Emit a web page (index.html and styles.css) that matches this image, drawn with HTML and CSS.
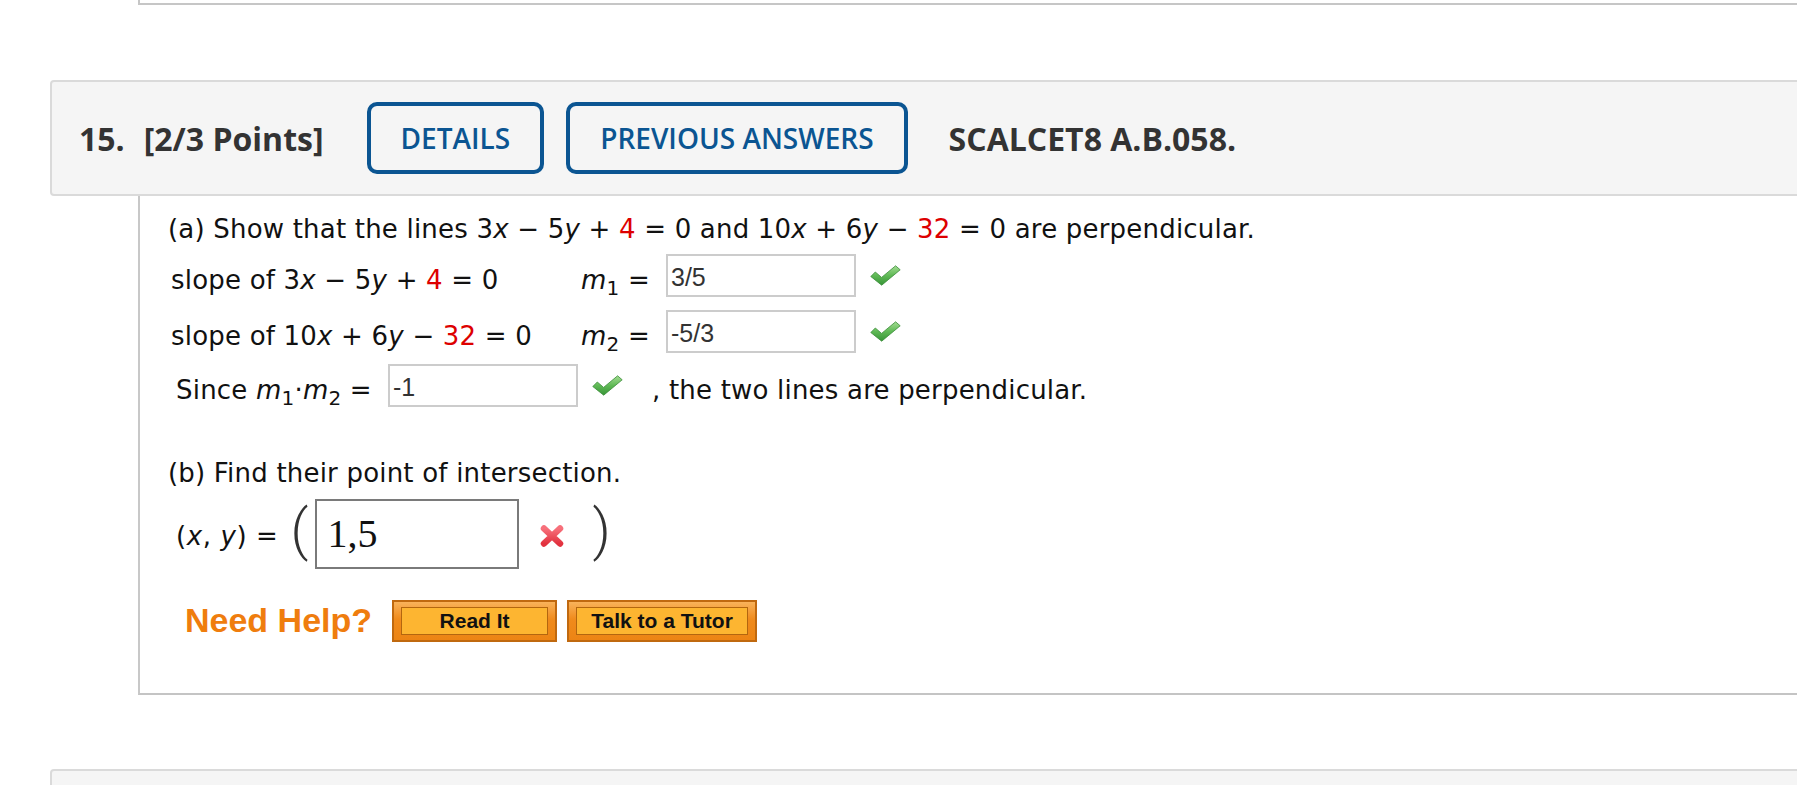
FILE: index.html
```html
<!DOCTYPE html>
<html lang="en">
<head>
<meta charset="utf-8">
<title>SCALCET8 A.B.058.</title>
<link rel="stylesheet" href="styles.css">
</head>
<body>
<svg class="sprite" aria-hidden="true">
  <defs>
    <linearGradient id="grad-check" x1="0" y1="0" x2="0" y2="1">
      <stop offset="0" stop-color="#a3dc92"/>
      <stop offset="0.5" stop-color="#5fb955"/>
      <stop offset="1" stop-color="#379437"/>
    </linearGradient>
    <linearGradient id="grad-cross" x1="0" y1="0" x2="0" y2="1">
      <stop offset="0" stop-color="#f7707b"/>
      <stop offset="1" stop-color="#e2323f"/>
    </linearGradient>
    <symbol id="i-check" viewBox="0 0 31 21">
      <path d="M0.8 11.5 L5.3 7 L11.6 12.4 L25.6 0.8 L30.2 4.8 L11.7 20.2 Z" fill="url(#grad-check)" stroke="#3a8d39" stroke-width="0.8" stroke-linejoin="round"/>
    </symbol>
    <symbol id="i-cross" viewBox="0 0 26 24">
      <path d="M5 4.5 L21 19.5 M21 4.5 L5 19.5" fill="none" stroke="url(#grad-cross)" stroke-width="6.5" stroke-linecap="round"/>
    </symbol>
  </defs>
</svg>

<div class="page">
  <div class="prev-question"></div>

  <section class="question">
    <header class="q-header">
      <span class="q-num">15.</span>
      <span class="q-points">[2/3 Points]</span>
      <button class="q-btn q-btn-details" type="button">DETAILS</button>
      <button class="q-btn q-btn-prev" type="button">PREVIOUS ANSWERS</button>
      <span class="q-code">SCALCET8 A.B.058.</span>
    </header>

    <div class="q-body">
      <p class="q-line">(a) Show that the lines 3<i>x</i> − 5<i>y</i> + <span class="red">4</span> = 0 and 10<i>x</i> + 6<i>y</i> − <span class="red">32</span> = 0 are perpendicular.</p>

      <div class="ans-row">
        <span class="ans-label">slope of 3<i>x</i> − 5<i>y</i> + <span class="red">4</span> = 0</span>
        <span class="ans-var"><i>m</i><sub>1</sub> =</span>
        <input class="ans-input" type="text" value="3/5">
        <svg class="check" width="31" height="21"><use href="#i-check"/></svg>
      </div>

      <div class="ans-row">
        <span class="ans-label">slope of 10<i>x</i> + 6<i>y</i> − <span class="red">32</span> = 0</span>
        <span class="ans-var"><i>m</i><sub>2</sub> =</span>
        <input class="ans-input" type="text" value="-5/3">
        <svg class="check" width="31" height="21"><use href="#i-check"/></svg>
      </div>

      <div class="ans-row since">
        <span class="since-label">Since <i>m</i><sub>1</sub>·<i>m</i><sub>2</sub> =</span>
        <input class="ans-input" type="text" value="-1">
        <svg class="check" width="31" height="21"><use href="#i-check"/></svg>
        <span class="since-tail">, the two lines are perpendicular.</span>
      </div>

      <p class="q-line part-b">(b) Find their point of intersection.</p>

      <div class="xy-row">
        <span class="xy-label">(<i>x</i>, <i>y</i>) =</span>
        <span class="paren">(</span>
        <div class="xy-box">1,5</div>
        <svg class="cross" width="26" height="24"><use href="#i-cross"/></svg>
        <span class="paren paren-close">)</span>
      </div>

      <div class="help-row">
        <span class="need-help">Need Help?</span>
        <button class="help-btn help-read" type="button"><span>Read It</span></button>
        <button class="help-btn help-tutor" type="button"><span>Talk to a Tutor</span></button>
      </div>
    </div>
  </section>

  <section class="question next">
    <header class="q-header q-header-next"></header>
  </section>
</div>
</body>
</html>
```

FILE: styles.css
```css
html, body {
  margin: 0;
  padding: 0;
  background: #ffffff;
  overflow: hidden;
}

body {
  font-family: "DejaVu Sans", Verdana, sans-serif;
  color: #111111;
}

.sprite {
  position: absolute;
  width: 0;
  height: 0;
  overflow: hidden;
}

.page {
  width: 100%;
  overflow: hidden;
}

.prev-question {
  margin-left: 138px;
  height: 3px;
  border-left: 2px solid #c6c6c6;
  border-bottom: 2px solid #c6c6c6;
}

/* ---------- header ---------- */
.q-header {
  margin-top: 75px;
  margin-left: 50px;
  margin-right: -20px;
  height: 116px;
  box-sizing: border-box;
  background: #f5f5f5;
  border: 2px solid #dadada;
  border-radius: 4px;
  display: flex;
  align-items: center;
  padding-left: 27px;
  font-family: "Open Sans", sans-serif;
  color: #333333;
}

.q-num,
.q-points,
.q-code {
  font-weight: 700;
  font-size: 32px;
  line-height: 40px;
  margin-top: 1px;
}

.q-num {
  margin-right: 19px;
}

.q-points {
  margin-right: 43px;
}

.q-btn {
  height: 72px;
  box-sizing: border-box;
  padding: 0 30px;
  border: 4px solid #0b5592;
  border-radius: 10px;
  background: transparent;
  color: #0b5592;
  font-family: "Open Sans", sans-serif;
  font-weight: 600;
  font-size: 28px;
  line-height: 1;
  cursor: pointer;
}

.q-btn-prev {
  margin-left: 22px;
  margin-right: 41px;
}

/* ---------- body ---------- */
.q-body {
  margin-left: 138px;
  border-left: 2px solid #c8c8c8;
  border-bottom: 2px solid #c4c4c4;
  height: 480px;
  padding: 17px 0 0 28px;
  font-size: 26px;
  letter-spacing: 0.2px;
}

.q-line {
  margin: 0;
  line-height: 32px;
  white-space: nowrap;
}

.red {
  color: #dd0000;
}

i {
  font-style: italic;
}

sub {
  font-size: 20px;
  line-height: 0;
  vertical-align: -6px;
}

.ans-row {
  display: flex;
  align-items: flex-start;
  height: 43px;
  margin-top: 9px;
  padding-left: 3px;
}

.ans-row + .ans-row {
  margin-top: 13px;
}

.ans-row.since {
  margin-top: 11px;
  padding-left: 8px;
}

.ans-label,
.ans-var,
.since-label,
.since-tail {
  line-height: 32px;
  margin-top: 10px;
  white-space: nowrap;
}

.ans-label {
  width: 410px;
}

.ans-var {
  width: 85px;
}

.since-label {
  width: 212px;
}

.ans-input {
  width: 190px;
  height: 43px;
  box-sizing: border-box;
  margin: 0;
  border: 2px solid #cccccc;
  padding: 3px 0 0 3px;
  font-family: "Liberation Sans", Arial, sans-serif;
  font-size: 25px;
  letter-spacing: 0;
  color: #333333;
  background: #ffffff;
  outline: none;
}

.check {
  flex: none;
  margin-left: 14px;
  margin-top: 11px;
}

.since-tail {
  margin-left: 29px;
}

.part-b {
  margin-top: 50px;
}

/* ---------- (x, y) row ---------- */
.xy-row {
  display: flex;
  align-items: flex-start;
  height: 70px;
  margin-top: 10px;
  padding-left: 8px;
}

.xy-label {
  margin-top: 21px;
  line-height: 32px;
  white-space: nowrap;
  letter-spacing: 0.6px;
}

.paren {
  font-family: Roboto, "Liberation Serif", serif;
  font-weight: 300;
  font-size: 56px;
  line-height: 70px;
  margin-top: -4px;
  margin-left: 12px;
  color: #333333;
}

.paren-close {
  margin-left: 28px;
}

.xy-box {
  width: 204px;
  height: 70px;
  box-sizing: border-box;
  margin-left: 6px;
  border: 2px solid #7a7a7a;
  padding-left: 11px;
  font-family: "Liberation Serif", "Times New Roman", serif;
  font-size: 40px;
  line-height: 66px;
  letter-spacing: 0;
  color: #111111;
}

.cross {
  flex: none;
  margin-left: 20px;
  margin-top: 25px;
}

/* ---------- help row ---------- */
.help-row {
  display: flex;
  align-items: flex-start;
  height: 42px;
  margin-top: 31px;
  padding-left: 17px;
  letter-spacing: 0;
}

.need-help {
  font-family: "Liberation Sans", Arial, sans-serif;
  font-weight: 700;
  font-size: 34px;
  line-height: 40px;
  color: #ef7d0e;
  white-space: nowrap;
}

.help-btn {
  height: 42px;
  box-sizing: border-box;
  margin: 0;
  padding: 5px 7px;
  border: 2px solid #c0690f;
  background: linear-gradient(#f9b25a, #f08b1c 45%, #ec8414);
  cursor: pointer;
}

.help-btn span {
  display: flex;
  align-items: center;
  justify-content: center;
  height: 100%;
  box-sizing: border-box;
  border: 1px solid #b3660f;
  background: #fdb531;
  font-family: "Liberation Sans", Arial, sans-serif;
  font-weight: 700;
  font-size: 21px;
  color: #111111;
  white-space: nowrap;
}

.help-read {
  width: 165px;
  margin-left: 20px;
}

.help-tutor {
  width: 190px;
  margin-left: 10px;
}

/* ---------- next question ---------- */
.q-header-next {
  margin-top: 74px;
  height: 60px;
}
```
